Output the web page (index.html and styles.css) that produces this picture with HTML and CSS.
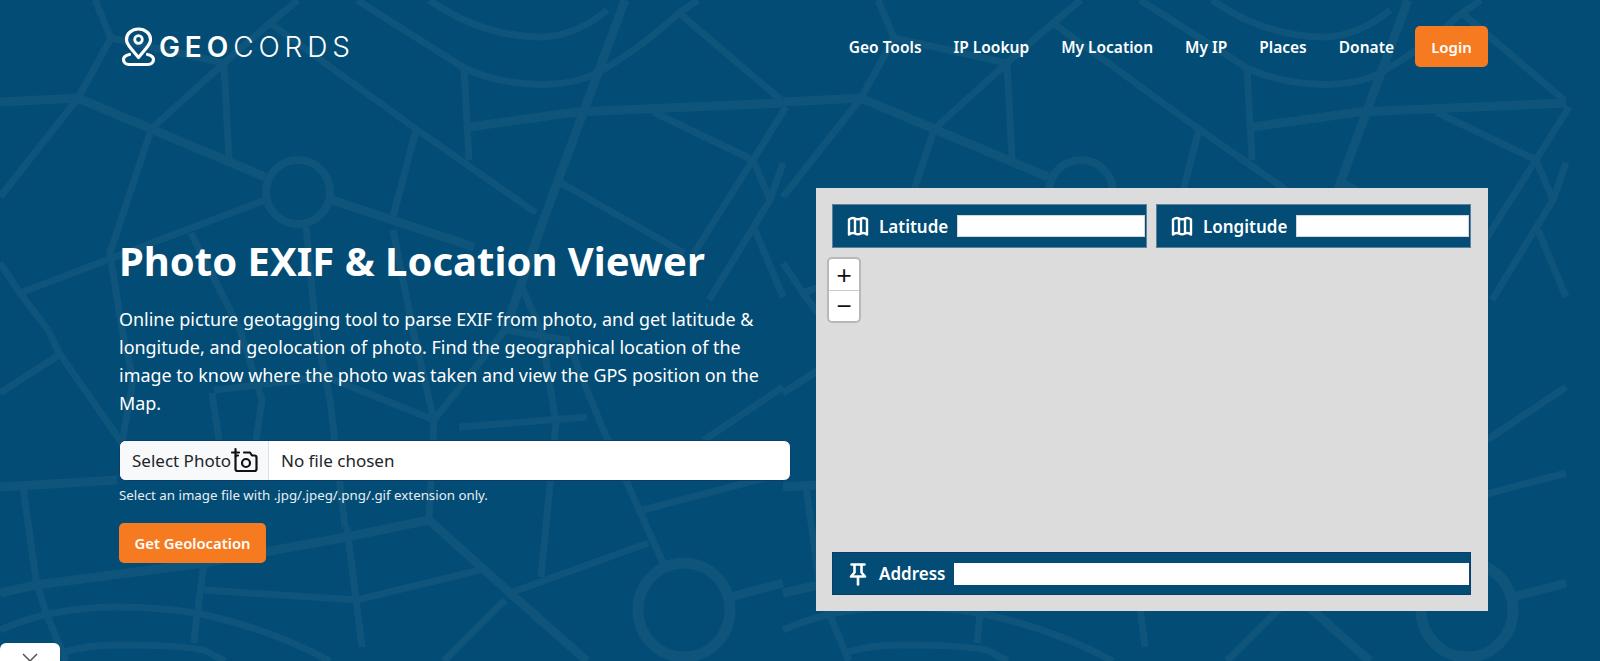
FILE: index.html
```html
<!DOCTYPE html>
<html lang="en">
<head>
<meta charset="utf-8">
<title>Photo EXIF &amp; Location Viewer</title>
<link rel="stylesheet" href="styles.css">
</head>
<body>
<svg class="bg" width="1600" height="661" aria-hidden="true">
  <defs>
    <g id="tile" fill="none" stroke="#0f557b">
      <g stroke-width="7">
        <path d="M95 0L111 38L78 98L0 197"/>
        <path d="M111 38L224 63L229 160"/>
        <path d="M298 0L270 23L224 63L150 130"/>
        <path d="M270 23L413 127L536 213"/>
        <path d="M150 133L110 253L122 330"/>
        <path d="M357 0L464 68C500 85 560 92 597 73C630 55 655 35 679 13L698 0"/>
        <path d="M429 0C470 28 510 37 541 37C565 37 590 25 607 10"/>
        <path d="M464 68L469 160"/>
        <path d="M653 112L753 160"/>
        <path d="M679 13L781 100"/>
        <path d="M786 107L753 160L694 253"/>
        <path d="M753 160L770 200M783 163L770 200L709 300"/>
        <path d="M416 130L393 217"/>
        <path d="M556 180L684 253"/>
        <path d="M393 230L413 330"/>
        <path d="M306 227L316 330"/>
        <path d="M191 233L240 330"/>
        <path d="M265 200L20 293L48 330"/>
        <path d="M20 293L0 263"/>
        <path d="M520 283L541 330"/>
        <path d="M755 230L783 297"/>
        <path d="M59 353L122 443M59 355L0 393"/>
        <path d="M48 330L59 353"/>
        <path d="M122 330L133 380L122 443"/>
        <path d="M240 330L262 400L252 468"/>
        <path d="M214 390L327 377"/>
        <path d="M212 393L219 440"/>
        <path d="M316 330L330 400L345 527"/>
        <path d="M413 330L434 420L429 520"/>
        <path d="M204 590L357 600L480 570"/>
        <path d="M347 527L362 647"/>
        <path d="M510 593L648 543"/>
        <path d="M505 600L444 661"/>
        <path d="M663 563L602 427"/>
        <path d="M541 577L556 423"/>
        <path d="M541 330L556 423"/>
        <path d="M459 427L587 417"/>
        <path d="M327 377L434 420"/>
        <path d="M602 427L567 340L505 330L434 420"/>
        <path d="M643 510L783 473"/>
        <path d="M704 440L783 387"/>
        <path d="M23 487L36 580L46 613L66 661"/>
        <path d="M204 563L196 623L194 643"/>
        <path d="M0 630C40 612 80 607 117 607C150 607 185 610 214 617C260 628 300 645 330 661"/>
        <path d="M61 653C80 647 100 645 117 645C145 645 175 645 204 650L225 661"/>
      </g>
      <g stroke-width="9">
        <path d="M0 102L78 98L265 177"/>
        <path d="M332 200L474 247"/>
        <path d="M469 127L576 112L783 103"/>
        <path d="M625 0L546 213L505 330"/>
        <path d="M0 487L117 480"/>
        <path d="M0 593L36 585L204 563L347 537L429 520"/>
        <path d="M429 520L510 593L587 661"/>
        <path d="M730 597L783 583"/>
      </g>
      <ellipse cx="298" cy="192" rx="32" ry="32" stroke-width="8"/>
      <ellipse cx="684" cy="610" rx="46" ry="47" stroke-width="11"/>
    </g>
  </defs>
  <use href="#tile"/>
  <use href="#tile" x="783"/>
</svg>

<div class="page">
  <header class="topbar">
    <a class="logo" href="#">
      <svg class="logo-pin" width="38" height="41" viewBox="0 0 38 41" fill="none" stroke="#fff" stroke-width="3.200">
        <path d="M18.500 31.500L11 22.500C8 19 6.500 16.500 6.500 13.500C6.500 7.500 11.800 3 18.500 3C25.200 3 30.500 7.500 30.500 13.500C30.500 16.500 29 19 26 22.500Z" stroke-linejoin="round"/>
        <circle cx="18.500" cy="13.500" r="3.800" stroke-width="2.800"/>
        <path d="M9.500 28.500C5 29.500 3.500 31.500 3.500 33.500C3.500 36.500 6 38.500 9 38.500H28C31 38.500 33.500 36.500 33.500 33.500C33.500 31.500 32 29.500 27.500 28.500" stroke-linecap="round"/>
      </svg>
      <span class="logo-text"><b>GEO</b>CORDS</span>
    </a>
    <nav class="nav">
      <a href="#">Geo Tools</a>
      <a href="#">IP Lookup</a>
      <a href="#">My Location</a>
      <a href="#">My IP</a>
      <a href="#">Places</a>
      <a href="#">Donate</a>
      <a class="login" href="#">Login</a>
    </nav>
  </header>

  <main class="hero">
    <section class="intro">
      <h1>Photo EXIF &amp; Location Viewer</h1>
      <p class="lead">Online picture geotagging tool to parse EXIF from photo, and get latitude &amp; longitude, and geolocation of photo. Find the geographical location of the image to know where the photo was taken and view the GPS position on the Map.</p>
      <div class="file">
        <span class="file-btn">Select Photo<svg class="cam" width="24" height="24" viewBox="0 0 24 24" fill="none" stroke="#111" stroke-width="2.200" stroke-linecap="round" stroke-linejoin="round"><path d="M5 6.500H4.500a2 2 0 0 0-2 2V20a2 2 0 0 0 2 2h17a2 2 0 0 0 2-2V8.500a2 2 0 0 0-2-2h-2.500L17 3.500H11"/><circle cx="13" cy="14" r="4"/><path d="M-1 3.500h7M2.500 0v7"/></svg></span>
        <span class="file-name">No file chosen</span>
      </div>
      <p class="hint">Select an image file with .jpg/.jpeg/.png/.gif extension only.</p>
      <a class="cta" href="#">Get Geolocation</a>
    </section>

    <section class="map">
      <div class="coords">
        <div class="bar">
          <svg class="ico" width="24" height="24" viewBox="0 0 24 24" fill="none" stroke="#fff" stroke-width="2.400" stroke-linejoin="round"><path d="M3 5.500C5.500 3.500 7 3.500 9 4.500C11 5.500 13 5.500 15 4.500C17 3.500 18.500 3.500 21 5.500V20.500C18.500 18.500 17 18.500 15 19.500C13 20.500 11 20.500 9 19.500C7 18.500 5.500 18.500 3 20.500Z"/><path d="M9 4.500V19.500M15 4.500V19.500"/></svg>
          <label>Latitude</label>
          <span class="field"></span>
        </div>
        <div class="bar">
          <svg class="ico" width="24" height="24" viewBox="0 0 24 24" fill="none" stroke="#fff" stroke-width="2.400" stroke-linejoin="round"><path d="M3 5.500C5.500 3.500 7 3.500 9 4.500C11 5.500 13 5.500 15 4.500C17 3.500 18.500 3.500 21 5.500V20.500C18.500 18.500 17 18.500 15 19.500C13 20.500 11 20.500 9 19.500C7 18.500 5.500 18.500 3 20.500Z"/><path d="M9 4.500V19.500M15 4.500V19.500"/></svg>
          <label>Longitude</label>
          <span class="field"></span>
        </div>
      </div>
      <div class="zoom">
        <a href="#">+</a>
        <a href="#">&#8722;</a>
      </div>
      <div class="bar address">
        <svg class="ico" width="24" height="24" viewBox="0 0 24 24" fill="none" stroke="#fff" stroke-width="2.600" stroke-linejoin="round" stroke-linecap="round"><path d="M5.500 2.500H18.500M8.500 3V10.500L5 14.500H19L15.500 10.500V3"/><path d="M12 15V22.500"/></svg>
        <label>Address</label>
        <span class="field"></span>
      </div>
    </section>
  </main>
</div>

<div class="tab"><svg width="18" height="10" viewBox="0 0 18 10" fill="none" stroke="#555" stroke-width="1.500"><path d="M2 1L9 8L16 1"/></svg></div>
</body>
</html>
```

FILE: styles.css
```css
* { box-sizing: border-box; }
html, body { margin: 0; height: 661px; overflow: hidden; }
body {
  background: #024c75;
  color: #fff;
  font-family: "Noto Sans", "Open Sans", sans-serif;
  position: relative;
}
a { text-decoration: none; color: inherit; }
.bg { position: absolute; left: 0; top: 0; }
.page { position: relative; padding: 26px 112px 0 119px; }
.topbar { display: flex; justify-content: space-between; align-items: center; height: 41px; }
.logo { display: flex; align-items: center; gap: 1px; padding-left: 1px; }
.logo-text { font-family: Inter, "Noto Sans", sans-serif; font-weight: 300; font-size: 28px; letter-spacing: 4.900px; line-height: 40px; }
.logo-text b { font-weight: 600; }
.nav { display: flex; align-items: center; gap: 32px; font-size: 15.500px; font-weight: 600; }
.login { background: #f67b20; border-radius: 5px; height: 41px; width: 73px; display: flex; align-items: center; justify-content: center; margin-left: -11px; font-size: 15px; }
.hero { display: flex; justify-content: space-between; align-items: center; margin-top: 121px; }
.intro { width: 672px; padding-top: 1px; }
h1 { margin: 0 0 20px; font-size: 40px; font-weight: 700; line-height: 48px; }
.lead { margin: 0 0 23px; font-size: 17.950px; line-height: 28px; }
.file { display: flex; height: 41px; background: #fff; border: 1px solid #0a3d6b; border-radius: 7px; color: #212529; font-size: 17px; align-items: stretch; overflow: hidden; }
.file-btn { width: 149px; background: #f8f9fa; border-right: 1px solid #dee2e6; display: flex; align-items: center; padding-left: 12px; flex: none; }
.cam { overflow: visible; flex: none; margin-left: 2px; }
.file-name { display: flex; align-items: center; padding-left: 12px; }
.hint { margin: 4px 0 18px; font-size: 13.300px; line-height: 20px; color: #e9eef2; }
.cta { display: flex; width: 147px; height: 40px; background: #f67b20; border-radius: 5px; align-items: center; justify-content: center; font-size: 14.800px; font-weight: 600; }
.map { width: 672px; height: 423px; background: #dcdcdc; padding: 16px 17px 16px 16px; display: flex; flex-direction: column; justify-content: space-between; position: relative; }
.coords { display: flex; gap: 9px; }
.bar { flex: 1; height: 44px; background: #024c75; border: 1px solid #0a3d6b; display: flex; align-items: center; padding: 0 1px 0 13px; gap: 9px; font-size: 17px; font-weight: 600; }
.coords .bar { border-color: #5f7f9a; }
.ico { flex: none; }
.bar label { flex: none; }
.field { flex: 1; height: 22px; background: #fff; }
.coords .field { border: 1px solid #d4d8dc; }
.address { flex: none; height: 43px; }
.zoom { position: absolute; left: 11px; top: 69px; width: 34px; border: 2px solid #b8b8b8; border-radius: 5px; background: #fff; overflow: hidden; }
.zoom a { display: flex; height: 31px; align-items: center; justify-content: center; color: #111; font-family: "Liberation Sans", Arial, sans-serif; font-size: 26px; line-height: 1; }
.zoom a + a { border-top: 1px solid #ccc; }
.tab { position: absolute; left: 0; top: 643px; width: 60px; height: 18px; background: #fff; border-radius: 6px 6px 0 0; display: flex; justify-content: center; padding-top: 10px; }
```
